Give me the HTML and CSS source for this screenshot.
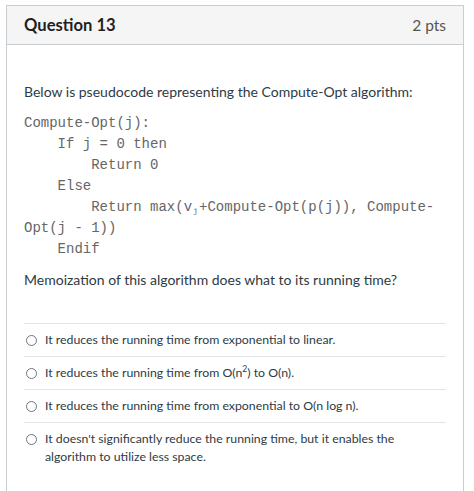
FILE: index.html
```html
<!DOCTYPE html>
<html>
<head>
<meta charset="utf-8">
<link rel="stylesheet" href="styles.css">
</head>
<body>
<div class="page">
  <section class="question">
    <header class="q-header">
      <h2 class="q-title">Question 13</h2>
      <span class="q-points">2 pts</span>
    </header>
    <div class="q-body">
      <p class="q-text">Below is pseudocode representing the Compute-Opt algorithm:</p>
      <pre class="code">Compute-Opt(j):
    If j = 0 then
        Return 0
    Else
        Return max(v<sub>j</sub>+Compute-Opt(p(j)), Compute-
Opt(j - 1))
    Endif</pre>
      <p class="q-text q-ask">Memoization of this algorithm does what to its running time?</p>
      <ul class="answers">
        <li class="answer"><span class="radio"></span><span class="answer-text">It reduces the running time from exponential to linear.</span></li>
        <li class="answer"><span class="radio"></span><span class="answer-text">It reduces the running time from O(n<sup>2</sup>) to O(n).</span></li>
        <li class="answer"><span class="radio"></span><span class="answer-text">It reduces the running time from exponential to O(n log n).</span></li>
        <li class="answer"><span class="radio"></span><span class="answer-text">It doesn't significantly reduce the running time, but it enables the algorithm to utilize less space.</span></li>
      </ul>
    </div>
  </section>
</div>
</body>
</html>
```

FILE: styles.css
```css
html, body {
  margin: 0;
  padding: 0;
  background: #ffffff;
}

body {
  font-family: Lato, "Noto Sans", sans-serif;
  color: #2d3b45;
}

.page {
  padding: 5px 10px 0 6px;
}

.question {
  border: 1px solid #c7cdd1;
  border-bottom: none;
  min-height: 500px;
}

.q-header {
  display: flex;
  align-items: center;
  justify-content: space-between;
  height: 38px;
  padding: 0 17px 0 17px;
  background: #f5f5f5;
  border-bottom: 1px solid #c7cdd1;
}

.q-title {
  margin: 0;
  font-size: 16.6px;
  font-weight: 700;
  color: #1f1f1f;
}

.q-points {
  font-size: 15.5px;
  color: #555555;
}

.q-body {
  padding: 36px 17px 0 17px;
}

.q-text {
  margin: 0;
  font-size: 14px;
  line-height: 21px;
}

.code {
  margin: 11px 0 9px 0;
  font-family: "Liberation Mono", "Courier New", monospace;
  font-size: 14px;
  line-height: 21px;
  color: #666666;
  white-space: pre;
}

.code sub {
  display: inline-block;
  width: 6px;
  padding-left: 1px;
  font-size: 8px;
  line-height: 8px;
  vertical-align: -2px;
}

.answers {
  list-style: none;
  margin: 33px 0 0 0;
  padding: 0;
}

.answer {
  display: flex;
  align-items: flex-start;
  gap: 8px;
  padding: 7px 8px 7px 2px;
  border-top: 1px solid #e2e5e7;
  font-size: 12.3px;
  line-height: 18px;
}

.radio {
  flex: none;
  width: 9px;
  height: 9px;
  margin-top: 4px;
  border: 1px solid #6b7780;
  border-radius: 50%;
  background: #ffffff;
}

.answer-text sup {
  font-size: 8.5px;
  line-height: 0;
}
```
